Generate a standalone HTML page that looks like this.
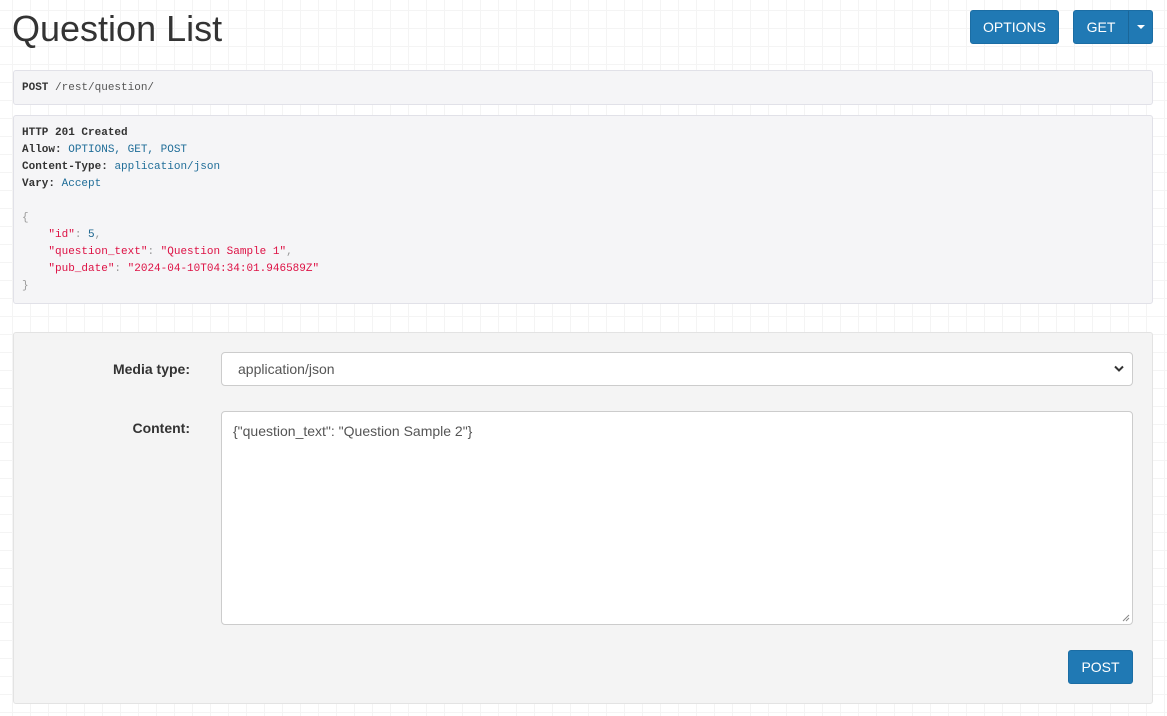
<!DOCTYPE html>
<html><head><meta charset="utf-8"><style>
*{box-sizing:border-box}
html,body{margin:0;width:1167px;height:716px;overflow:hidden}
body{font-family:"Liberation Sans",Arial,sans-serif;color:#333;background-color:#fff;
background-image:linear-gradient(#f4f4f4 1px,transparent 1px),linear-gradient(90deg,#f4f4f4 1px,transparent 1px);
background-size:18px 18px;background-position:12px 10px;position:relative}
h1{position:absolute;left:12px;top:9px;margin:0;font-weight:400;font-size:36px;color:#333;line-height:40px}
.btn{position:absolute;background:#2079b4;color:#fff;border-radius:3px;font-size:14px;display:flex;align-items:center;justify-content:center;border:1px solid #1b6da4}
.panel{position:absolute;left:13px;width:1140px;background:#f5f5f7;border:1px solid #e1e1e8;border-radius:3px;font-family:"Liberation Mono",Consolas,monospace;font-size:11px;color:#333;padding:0 8px}
.l{height:17px;line-height:17px;white-space:pre}
b{font-weight:bold}
.t{color:#1f6d98}.s{color:#dd1144}.p{color:#999}.n{color:#19638d}
.well{position:absolute;left:13px;top:332px;width:1140px;height:372px;background:#f4f4f4;border:1px solid #e3e3e3;border-radius:3px}
.lab{position:absolute;font-weight:bold;font-size:14px;color:#333;right:962px}
.inp{position:absolute;left:207px;width:912px;background:#fff;border:1px solid #ccc;border-radius:4px;font-size:14px;color:#555}
</style></head><body>
<h1>Question List</h1>
<div class="btn" style="left:970px;top:10px;width:89px;height:34px">OPTIONS</div>
<div class="btn" style="left:1073px;top:10px;width:80px;height:34px;justify-content:flex-start">
<span style="width:54px;text-align:center">GET</span><span style="width:1px;height:32px;background:#1a6699"></span>
<span style="flex:1;display:flex;justify-content:center"><span style="border-left:4px solid transparent;border-right:4px solid transparent;border-top:4px solid #fff"></span></span></div>
<div class="panel" style="top:70px;height:35px;padding-top:9px"><div class="l"><b>POST</b> <span style="color:#555">/rest/question/</span></div></div>
<div class="panel" style="top:115px;height:189px;padding-top:9px">
<div class="l"><b>HTTP 201 Created</b></div>
<div class="l"><b>Allow:</b> <span class="t">OPTIONS, GET, POST</span></div>
<div class="l"><b>Content-Type:</b> <span class="t">application/json</span></div>
<div class="l"><b>Vary:</b> <span class="t">Accept</span></div>
<div class="l"> </div>
<div class="l"><span class="p">{</span></div>
<div class="l">    <span class="s">"id"</span><span class="p">:</span> <span class="n">5</span><span class="p">,</span></div>
<div class="l">    <span class="s">"question_text"</span><span class="p">:</span> <span class="s">"Question Sample 1"</span><span class="p">,</span></div>
<div class="l">    <span class="s">"pub_date"</span><span class="p">:</span> <span class="s">"2024-04-10T04:34:01.946589Z"</span></div>
<div class="l"><span class="p">}</span></div>
</div>
<div class="well">
<div class="lab" style="top:28px">Media type:</div>
<div class="inp" style="top:19px;height:34px;line-height:32px;padding-left:16px">application/json
<svg style="position:absolute;right:8px;top:12px" width="10" height="8" viewBox="0 0 10 8"><path d="M1 1.5L5 5.5L9 1.5" stroke="#333" stroke-width="2" fill="none"/></svg></div>
<div class="lab" style="top:87px">Content:</div>
<div class="inp" style="top:78px;height:214px;padding:9px 11px;line-height:20px">{"question_text": "Question Sample 2"}
<svg style="position:absolute;right:2px;bottom:2px" width="8" height="8"><path d="M7 1L1 7M7 4L4 7" stroke="#888" stroke-width="1"/></svg></div>
<div class="btn" style="left:1054px;top:317px;width:65px;height:34px;font-size:14px">POST</div>
</div>
</body></html>
